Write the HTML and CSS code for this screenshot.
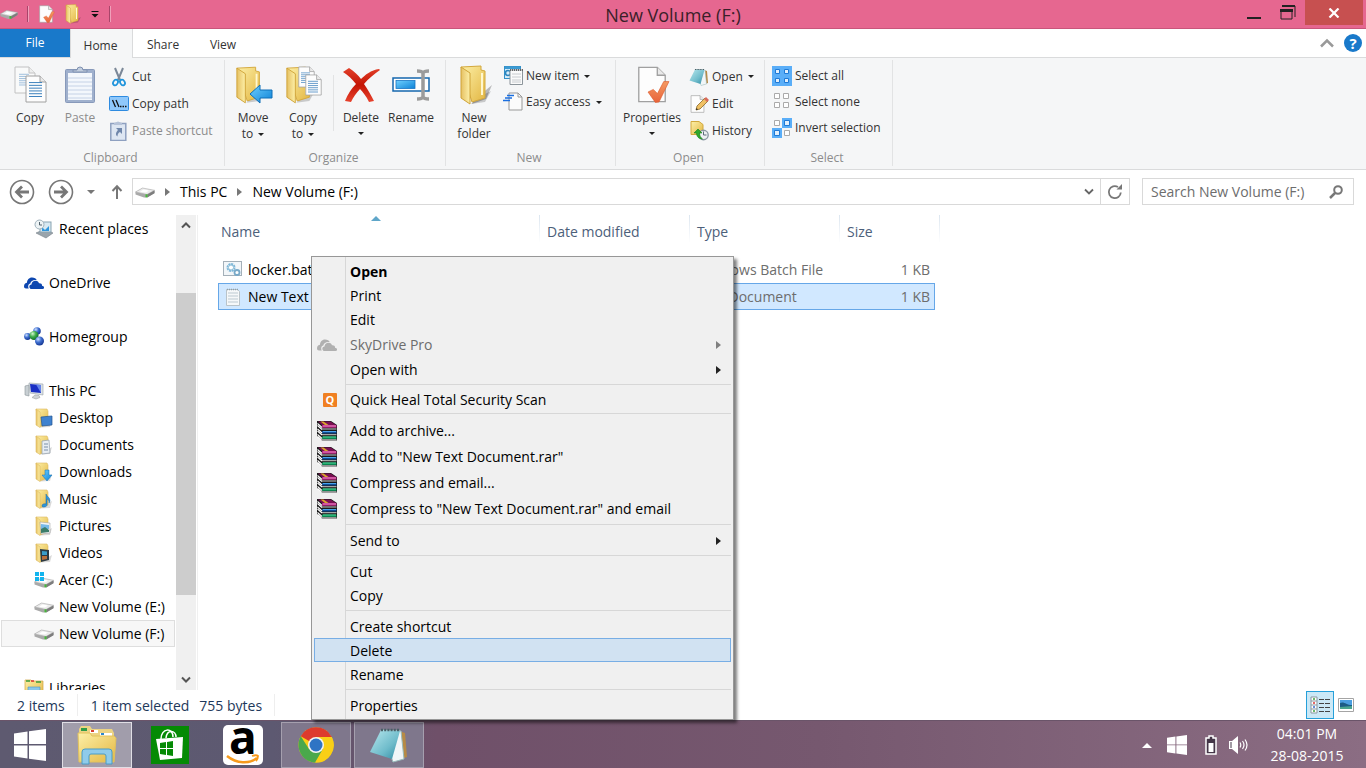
FILE: index.html
```html
<!DOCTYPE html>
<html lang="en">
<head>
  <meta charset="UTF-8" />
  <meta name="viewport" content="width=device-width, initial-scale=1.0" />
  <title>New Volume (F:)</title>
  <link rel="stylesheet" href="styles.css">
</head>
<body>
  <!-- shared icons -->
  <svg class="defs" width="0" height="0" aria-hidden="true">
    <defs>
      <linearGradient id="gFolder" x1="0" y1="0" x2="1" y2="1"><stop offset="0" stop-color="#fdf0a8"/><stop offset="1" stop-color="#e3b743"/></linearGradient>
      <linearGradient id="gFlap" x1="0" y1="0" x2="1" y2="0"><stop offset="0" stop-color="#e6c163"/><stop offset="1" stop-color="#fdf0a8"/></linearGradient>
      <linearGradient id="gBlue" x1="0" y1="0" x2="1" y2="1"><stop offset="0" stop-color="#6fd0ff"/><stop offset="1" stop-color="#0e82d6"/></linearGradient>
      <linearGradient id="gPad" x1="0" y1="0" x2="1" y2="1"><stop offset="0" stop-color="#b8e8ee"/><stop offset=".6" stop-color="#6fbccb"/><stop offset="1" stop-color="#2f8aa3"/></linearGradient>
      <linearGradient id="gRed" x1="0" y1="0" x2="0" y2="1"><stop offset="0" stop-color="#e2402a"/><stop offset=".5" stop-color="#c41505"/><stop offset="1" stop-color="#e8432e"/></linearGradient>
      <linearGradient id="gCheck" x1="0" y1="0" x2="0" y2="1"><stop offset="0" stop-color="#f49a62"/><stop offset="1" stop-color="#e8633a"/></linearGradient>
      <radialGradient id="gBall" cx=".35" cy=".3" r=".7"><stop offset="0" stop-color="#cfe0ff"/><stop offset=".5" stop-color="#3f6fd0"/><stop offset="1" stop-color="#173a96"/></radialGradient>
      <radialGradient id="gGreen" cx=".35" cy=".3" r=".7"><stop offset="0" stop-color="#d5f7d0"/><stop offset=".5" stop-color="#3fae4c"/><stop offset="1" stop-color="#14702a"/></radialGradient>
    </defs>
    <symbol id="drive" viewBox="0 0 20 14">
      <path d="M.5 7 7 3.500 19.500 5.500 19.500 8 12 12.500 9 12.500 .5 9.500z" fill="#a9a9a9"/>
      <path d="M.5 7 7.500 3 19.500 5.300 12 9.500z" fill="#ececec" stroke="#aaa" stroke-width=".6"/>
      <path d="M5 6.700 8.500 4.500 14 5.500 11 7.500z" fill="#fff"/>
      <path d="M12.300 9.500v3l7.200-4.300V5.500z" fill="#7d7d7d"/>
      <path d="M10.500 9.300h2v3h-2z" fill="#46b83a"/>
    </symbol>
    <symbol id="folder" viewBox="0 0 32 40">
      <path d="M18 33 32 26 26 37 12 39z" fill="#000" opacity=".18"/>
      <path d="M2 2 22 1 22 5 26 6 26 33 13 37z" fill="url(#gFolder)" stroke="#d3a83c"/>
      <path d="M2 2 11 8 11 39 2 33z" fill="url(#gFlap)" stroke="#cfa338"/>
      <path d="M23 8v22" stroke="#fff7cf" stroke-width="2"/>
    </symbol>
    <symbol id="page" viewBox="0 0 22 28">
      <path d="M1 1h14l6 6v20H1z" fill="#fdfdfd" stroke="#a0a0a0"/>
      <path d="M15 1v6h6" fill="#e9e9e9" stroke="#a0a0a0"/>
    </symbol>
    <symbol id="lines" viewBox="0 0 14 18">
      <path d="M0 1h14M0 4h14M0 7h14M0 10h14M0 13h14M0 16h14" stroke="#2f78b8" stroke-width="1"/>
    </symbol>
    <symbol id="check" viewBox="0 0 20 22">
      <path d="M0 11.500 5 9 9 13 15 1.500 20 1.500 10.500 21 7 21.500z" fill="url(#gCheck)" stroke="#dd5a2c" stroke-width=".6"/>
    </symbol>
    <symbol id="notepad" viewBox="0 0 20 18">
      <path d="M15 2 18 3 19 15 13 17z" fill="#b78a45"/>
      <path d="M6 1.500 16 2 17.500 16 12 17.500z" fill="#f1f6f8" stroke="#9bb" stroke-width=".5"/>
      <path d="M6 1.500 15.500 2 11.500 16 .5 12.500z" fill="url(#gPad)"/>
      <path d="M6 1.500h9.500" stroke="#4a6068" stroke-width="1.200" stroke-dasharray="1 .6"/>
    </symbol>
    <symbol id="rar" viewBox="0 0 20 20">
      <path d="M0 0h14l6 4v15.500H5L0 15z" fill="#1a1a1a"/>
      <path d="M1 .5h12.500l5.500 3.500H5z" fill="#7a0f52"/>
      <path d="M3.500.5h3l5 3.500H8z" fill="#d9a62b"/>
      <path d="M5 4h14.500v2.800H5z" fill="#b0217a"/><path d="M6 4.500h13v1H6z" fill="#ef8cc8"/>
      <path d="M5 10h14.500v2.500H5z" fill="#0f4f97"/><path d="M6 10h13v1H6z" fill="#4aa3ec"/>
      <path d="M5 15.500h14.500V18H5z" fill="#0b8550"/><path d="M6 15.500h13v1H6z" fill="#4fe0a0"/>
      <path d="M.5 2.500l4.500 4M.5 4.500l4.500 4M.5 8l4.500 4M.5 10l4.500 4M.5 13.500l4.500 4M.5 15.500l4 3.500" stroke="#fff" stroke-width="1.100"/>
      <path d="M5 8h14.500M5 13.700h14.500M5 18.800h14.500" stroke="#f4f4f4" stroke-width=".8"/>
    </symbol>
    <symbol id="cloud" viewBox="0 0 20 14">
      <path d="M0 10.500C0 8 1.500 7 3 6.800 3 4 5 1.500 8 1.500c2.500 0 4 1 4.800 2.700-3-.7-6 .5-6.500 3.300C4 8 3.800 10.500 4.800 12.500H2C.8 12.500 0 11.500 0 10.500z"/>
      <path d="M7 13C4.500 12 5 8.500 7.500 8.500c0-4 6-5.200 7.500-1.300 2-.3 3.300 1 3 2.500 2.800.2 2.700 3.300.5 3.300z"/>
    </symbol>
    <symbol id="winlogo" viewBox="0 0 32 32">
      <path d="M0 4.500 13.500 2.500V15H0zM15 2.300 32 0V15H15zM0 16.500h13.500V29.500L0 27.500zM15 16.500h17V32L15 29.700z"/>
    </symbol>
    <symbol id="sidefolder" viewBox="0 0 18 20">
      <path d="M8 17 17 12 15 19 5 19.500z" fill="#000" opacity=".15"/>
      <path d="M1 1 12 1 13 3 13 16 5 19z" fill="url(#gFolder)" stroke="#ddbb62" stroke-width=".6"/>
      <path d="M1 1 5 4 5 19.500 1 17z" fill="url(#gFlap)" stroke="#ddbb62" stroke-width=".6"/>
    </symbol>
  </svg>

  <header class="titlebar">
    <div class="quick">
      <svg width="18" height="14"><use href="#drive"/></svg>
      <i class="qsep"></i>
      <button aria-label="Properties"><svg width="18" height="20" viewBox="0 0 18 20"><use href="#page" x="1" y="1" width="14" height="18"/><use href="#check" x="5" y="7" width="12" height="12"/></svg></button>
      <button aria-label="New folder"><svg width="16" height="20"><use href="#folder"/></svg></button>
      <button aria-label="Customize"><svg width="10" height="10" viewBox="0 0 10 10"><path d="M1.500 2h7v1h-7zM1.500 5h7L5 8.500z" fill="#111"/></svg></button>
      <i class="qsep"></i>
    </div>
    <h1>New Volume (F:)</h1>
    <div class="winbtns">
      <button aria-label="Minimize"><svg width="14" height="20" viewBox="0 0 14 20"><path d="M0 14h14v2H0z" fill="#222"/></svg></button>
      <button aria-label="Restore"><svg width="16" height="16" viewBox="0 0 16 16"><path d="M3 1h12v11M1 6h11v8H1z" fill="none" stroke="#222"/><path d="M2 0h13v2H2zM0 4h13v3H0z" fill="#222"/></svg></button>
      <button class="close" aria-label="Close"><svg width="12" height="10" viewBox="0 0 12 10"><path d="M1.500.5l9 9M10.500.5l-9 9" stroke="#fff" stroke-width="2.200"/></svg></button>
    </div>
  </header>

  <nav class="tabs">
    <button class="file">File</button>
    <button class="active">Home</button>
    <button>Share</button>
    <button>View</button>
    <div class="tabs-right">
      <button aria-label="Minimize the ribbon"><svg width="14" height="10" viewBox="0 0 14 10"><path d="M1 8.500l6-6 6 6" fill="none" stroke="#999" stroke-width="2.500"/></svg></button>
      <button class="help" aria-label="Help">?</button>
    </div>
  </nav>

  <section class="ribbon">
    <div class="group clipboard">
      <div class="tools">
        <button class="big"><svg width="36" height="38" viewBox="0 0 36 38"><g opacity=".6"><use href="#page" x="2" y="0" width="22" height="28"/><use href="#lines" x="7" y="7" width="10" height="14"/></g><use href="#page" x="13" y="9" width="22" height="28"/><use href="#lines" x="17" y="15" width="13" height="18"/></svg>Copy</button>
        <button class="big" disabled><svg width="32" height="38" viewBox="0 0 32 38"><rect x="1.500" y="3.500" width="29" height="33" rx="1" fill="#9fb0cd" stroke="#8799ba"/><path d="M4 7h24v27H4z" fill="#f3f7fc"/><path d="M4 12h24M4 16h24M4 20h24M4 24h24M4 28h24M4 32h24" stroke="#c5d2e6"/><path d="M9 6V4h4a3 3 0 0 1 6 0h4v2z" fill="#c2cede" stroke="#7e90b0"/></svg>Paste</button>
        <div class="small-col">
          <button><svg width="20" height="20" viewBox="0 0 20 20"><path d="M6 1l5 12M14 1L9 13" stroke="#7b8898" stroke-width="2"/><ellipse cx="6.500" cy="15.500" rx="2.200" ry="3" transform="rotate(30 6.500 15.500)" fill="none" stroke="#1f94dc" stroke-width="1.800"/><ellipse cx="13.500" cy="15.500" rx="2.200" ry="3" transform="rotate(-30 13.500 15.500)" fill="none" stroke="#1f94dc" stroke-width="1.800"/></svg>Cut</button>
          <button><svg width="20" height="20" viewBox="0 0 20 20"><rect x=".5" y="2.500" width="19" height="14" rx="1" fill="#8fc8fb" stroke="#2e8be0"/><path d="M3.500 6l3 7M7 6l3 7" stroke="#111" stroke-width="1.300"/><path d="M11 12.500h1.500M13.500 12.500H15M16 12.500h1.500" stroke="#111" stroke-width="1.500"/></svg>Copy path</button>
          <button disabled><svg width="20" height="20" viewBox="0 0 20 20"><rect x="1.800" y="2.500" width="15" height="17" fill="#dde6f2" stroke="#8ea0c0" stroke-width="1.500"/><path d="M5 4V2l4-1.500L13 2v2z" fill="#b5c2d8"/><path d="M7 7h6v6l-2-2c-2 1-2.500 2.500-2.500 4.500C6 14 7 11 9 9z" fill="#6f86aa"/></svg>Paste shortcut</button>
        </div>
      </div>
      <div class="caption">Clipboard</div>
    </div>

    <div class="group organize">
      <div class="tools">
        <button class="big"><svg width="40" height="38" viewBox="0 0 40 38"><use href="#folder" x="2" y="0" width="30" height="38"/><path d="M17 28l10-9v5h12v8H27v5z" fill="url(#gBlue)" stroke="#0f6fb8"/></svg>Move<span>to <i class="caret"></i></span></button>
        <button class="big"><svg width="40" height="38" viewBox="0 0 40 38"><use href="#folder" x="2" y="0" width="30" height="38"/><use href="#page" x="15" y="0" width="17" height="22"/><use href="#lines" x="18" y="6" width="9" height="12"/><use href="#page" x="22" y="8" width="17" height="22"/><use href="#lines" x="25" y="14" width="10" height="14"/></svg>Copy<span>to <i class="caret"></i></span></button>
        <i class="vline"></i>
        <button class="big"><svg width="38" height="38" viewBox="0 0 38 38"><path d="M1 6 7 2c5 3 9 7 12 11C23 9 29 4 37 3l1 1c-6 4-12 9-16 14 4 6 7 11 10 17l-5 1c-3-6-6-10-9-13-4 4-7 9-9 13l-6-1c3-7 6-12 11-17C10 13 6 9 1 6z" fill="url(#gRed)"/></svg>Delete<i class="caret"></i></button>
        <button class="big"><svg width="40" height="38" viewBox="0 0 40 38"><rect x="2" y="12" width="36" height="13" fill="#fff" stroke="#1467ae" stroke-width="1.500"/><rect x="5" y="14.500" width="19" height="8" fill="url(#gBlue)" stroke="#1a76c4" stroke-width=".8"/><path d="M26 5c3 0 5 0 6 2 1-2 3-2 6-2M26 33c3 0 5 0 6-2 1 2 3 2 6 2M32 6v26" stroke="#9b9b9b" stroke-width="3.500" fill="none"/></svg>Rename</button>
      </div>
      <div class="caption">Organize</div>
    </div>

    <div class="group new">
      <div class="tools">
        <button class="big"><svg width="36" height="40" viewBox="0 0 36 40"><path d="M18 35 36 20 30 34 16 39z" fill="#000" opacity=".25"/><use href="#folder" x="3" y="0" width="32" height="40"/></svg>New<span>folder</span></button>
        <div class="small-col tight">
          <button><svg width="20" height="20" viewBox="0 0 20 20"><rect x="1.500" y=".5" width="16" height="12" fill="#d6ecf9" stroke="#3490c8"/><path d="M2 .5h15V3H2z" fill="#3c9bd3"/><circle cx="5" cy="7" r="2.500" fill="none" stroke="#2b86c0" stroke-width="1.500"/><path d="M7 4h12.500v14.500H7z" fill="#fbfbfb" stroke="#8c959b"/><path d="M7 4h13" stroke="#666" stroke-width="2" stroke-dasharray="1 1"/><path d="M9 8h9M9 11h9M9 14h9M9 16h9" stroke="#c8ccd0"/></svg>New item <i class="caret"></i></button>
          <button><svg width="20" height="20" viewBox="0 0 20 20"><path d="M6 1h9l4 4v13H6z" fill="#fbfbfb" stroke="#999"/><path d="M15 1v4h4" fill="none" stroke="#999"/><path d="M4 3.500h7M2 6h7M0 8.500h7" stroke="#1b6fe0" stroke-width="1.300"/></svg>Easy access <i class="caret"></i></button>
        </div>
      </div>
      <div class="caption">New</div>
    </div>

    <div class="group open">
      <div class="tools">
        <button class="big wide"><svg width="36" height="40" viewBox="0 0 36 40"><use href="#page" x="3" y="1" width="30" height="37"/><use href="#check" x="13" y="15" width="23" height="23"/></svg>Properties<i class="caret"></i></button>
        <div class="small-col">
          <button><svg width="20" height="20"><use href="#notepad"/></svg>Open <i class="caret"></i></button>
          <button><svg width="20" height="20" viewBox="0 0 20 20"><use href="#page" x="1" y="1" width="15" height="18"/><path d="M7 16l1-4 8-8 3 3-8 8z" fill="#f0c063" stroke="#8a6a2a" stroke-width=".8"/><path d="M15 5l2-2 3 3-2 2z" fill="#d8695a"/><path d="M7 16l.6-2 1.400 1.400z" fill="#222"/></svg>Edit</button>
          <button><svg width="20" height="20" viewBox="0 0 20 20"><path d="M2 .5h8l4 3v10H2z" fill="url(#gFolder)" stroke="#d2a83c"/><circle cx="14.500" cy="14" r="4.700" fill="#eef1f3" stroke="#8b98a3" stroke-width="1.400"/><path d="M14.500 10.500V14h3" stroke="#5c6b78" fill="none"/><path d="M5 12l4-4 4 4h-2.500c0 2.500 1 4.500 3 6-4-.3-6-2.500-6-6z" fill="#2fa82b" stroke="#188018" stroke-width=".6"/></svg>History</button>
        </div>
      </div>
      <div class="caption">Open</div>
    </div>

    <div class="group select">
      <div class="tools">
        <div class="small-col tight">
          <button><svg width="20" height="20" viewBox="0 0 20 20"><path d="M0 0h20v20H0z" fill="#5aaef8"/><path d="M3.500 3.500h4v4h-4zM12.500 3.500h4v4h-4zM3.500 12.500h4v4h-4zM12.500 12.500h4v4h-4z" fill="#e2effc" stroke="#1f7ad6"/></svg>Select all</button>
          <button><svg width="20" height="20" viewBox="0 0 20 20"><path d="M2.500 1.500h5v5h-5zM11.500 1.500h5v5h-5zM2.500 10.500h5v5h-5zM11.500 10.500h5v5h-5z" fill="#fff" stroke="#aaa"/></svg>Select none</button>
          <button><svg width="20" height="20" viewBox="0 0 20 20"><path d="M10 0h10v10H10zM0 10h10v10H0z" fill="#5aaef8"/><path d="M12.500 2.500h5v5h-5zM2.500 12.500h5v5h-5z" fill="#e2effc" stroke="#1f7ad6"/><path d="M2.500 2.500h5v5h-5zM12.500 12.500h5v5h-5z" fill="#fff" stroke="#aaa"/></svg>Invert selection</button>
        </div>
      </div>
      <div class="caption">Select</div>
    </div>
  </section>

  <div class="navbar">
    <button class="round" aria-label="Back"><svg width="26" height="26" viewBox="0 0 26 26"><circle cx="13" cy="13" r="11.500" fill="#fff" stroke="#777" stroke-width="1.600"/><path d="M20 13H8M13 7.500L7.500 13l5.500 5.500" fill="none" stroke="#777" stroke-width="2.800"/></svg></button>
    <button class="round" aria-label="Forward"><svg width="26" height="26" viewBox="0 0 26 26"><circle cx="13" cy="13" r="11.500" fill="#fff" stroke="#777" stroke-width="1.600"/><path d="M6 13h12M13 7.500l5.500 5.500-5.500 5.500" fill="none" stroke="#777" stroke-width="2.800"/></svg></button>
    <button aria-label="Recent locations"><svg width="8" height="6" viewBox="0 0 8 6"><path d="M0 1h8L4 5z" fill="#777"/></svg></button>
    <button class="up" aria-label="Up"><svg width="12" height="16" viewBox="0 0 12 16"><path d="M6 15V3M1.500 7L6 2.200 10.500 7" fill="none" stroke="#777" stroke-width="2"/></svg></button>
    <div class="address">
      <svg width="20" height="14"><use href="#drive"/></svg>
      <svg class="chev" width="5" height="8" viewBox="0 0 5 8"><path d="M0 0l5 4-5 4z" fill="#777"/></svg>
      <a href="#">This PC</a>
      <svg class="chev" width="5" height="8" viewBox="0 0 5 8"><path d="M0 0l5 4-5 4z" fill="#777"/></svg>
      <a href="#">New Volume (F:)</a>
      <button class="drop" aria-label="Previous locations"><svg width="10" height="8" viewBox="0 0 10 8"><path d="M1 1.500l4 4 4-4" fill="none" stroke="#666" stroke-width="1.800"/></svg></button>
      <button class="refresh" aria-label="Refresh"><svg width="16" height="16" viewBox="0 0 16 16"><path d="M13.800 8.500A6 6 0 1 1 11 3" fill="none" stroke="#777" stroke-width="1.800"/><path d="M9.500 5.500H15V0z" fill="#777"/></svg></button>
    </div>
    <div class="search">
      <input type="text" aria-label="Search" placeholder="Search New Volume (F:)">
      <svg width="14" height="14" viewBox="0 0 14 14"><circle cx="9" cy="5" r="3.800" fill="none" stroke="#777" stroke-width="2"/><path d="M6 8L1 13" stroke="#777" stroke-width="2.500"/></svg>
    </div>
  </div>

  <main>
    <aside>
      <ul class="tree">
        <li class="sub"><svg width="20" height="20" viewBox="0 0 20 20"><path d="M2 14l9-4 8 4-7 5z" fill="#9aa4ab" stroke="#77828a" stroke-width=".6"/><rect x="6" y="3" width="11" height="10" fill="#d7e9f2" stroke="#8aa3b1"/><path d="M8 8l3 3 4-4v5H8z" fill="#3096dc"/><circle cx="5.500" cy="5.500" r="4.500" fill="#edf3f5" stroke="#9fb1bb"/><path d="M5.500 3v3H8" stroke="#52636e" fill="none"/></svg>Recent places</li>
        <li class="gap"></li>
        <li><svg width="20" height="14" fill="#0d47b0"><use href="#cloud"/></svg>OneDrive</li>
        <li class="gap"></li>
        <li><svg width="20" height="20" viewBox="0 0 20 20"><circle cx="3.500" cy="9.500" r="3.400" fill="url(#gBall)"/><circle cx="13" cy="4" r="3.800" fill="url(#gBall)"/><circle cx="10" cy="8.500" r="4.500" fill="url(#gGreen)"/><circle cx="15.500" cy="14" r="4.500" fill="url(#gBall)"/></svg>Homegroup</li>
        <li class="gap"></li>
        <li><svg width="20" height="20" viewBox="0 0 20 20"><path d="M1 5l4-1v11l-4-1z" fill="#c8cfd3" stroke="#8a9499" stroke-width=".6"/><path d="M5 2l14 1v11L6 12z" fill="#dce2e6" stroke="#98a2a8" stroke-width=".6"/><path d="M6 3l11 1v8L7 11z" fill="#1a2fc4"/><path d="M12 3.500l5 .5v8z" fill="#6484ea"/><path d="M11 14l4 .5 1 2-4 1.500-4-1.500z" fill="#cfd4d7" stroke="#999" stroke-width=".5"/></svg>This PC</li>
        <li class="sub"><svg width="18" height="20" viewBox="0 0 18 20"><use href="#sidefolder"/><path d="M6 9l11-1v9l-10 1z" fill="#3f82cf" stroke="#23558f" stroke-width=".7"/></svg>Desktop</li>
        <li class="sub"><svg width="18" height="20" viewBox="0 0 18 20"><use href="#sidefolder"/><path d="M7 6l7-1 1 13-8 1z" fill="#e7edf3" stroke="#909eaa" stroke-width=".7"/><path d="M9 9h4M9 12h4M9 15h4" stroke="#7a8fa8"/></svg>Documents</li>
        <li class="sub"><svg width="18" height="20" viewBox="0 0 18 20"><use href="#sidefolder"/><path d="M10 8h4v5h3l-5 6-5-6h3z" fill="url(#gBlue)" stroke="#1470b0" stroke-width=".5"/></svg>Downloads</li>
        <li class="sub"><svg width="18" height="20" viewBox="0 0 18 20"><use href="#sidefolder"/><path d="M11 5c1 3 4 3 4 7l-1 2c0-3-1-4-2-4v6c0 2-5 3-5 1s2-2.500 4-2z" fill="#2f96da" stroke="#1b69a5" stroke-width=".5"/></svg>Music</li>
        <li class="sub"><svg width="18" height="20" viewBox="0 0 18 20"><use href="#sidefolder"/><path d="M5 6l10 1v10l-9 1z" fill="#f5f5f5" stroke="#999" stroke-width=".5"/><path d="M6 8l8 1v4H6z" fill="#77b9e8"/><path d="M6 13l4-2 4 3v2l-8 1z" fill="#3b7d6a"/></svg>Pictures</li>
        <li class="sub"><svg width="18" height="20" viewBox="0 0 18 20"><use href="#sidefolder"/><path d="M5 6l9 1v10l-8 2z" fill="#2c3a44"/><path d="M7 8l5 .5v3.500L7 12z" fill="#3a9cc9"/><path d="M7 13h5v3l-5 1z" fill="#b9703c"/></svg>Videos</li>
        <li class="sub"><svg width="20" height="18" viewBox="0 0 20 18"><use href="#drive" y="4" width="20" height="14"/><path d="M1 1h4v4H1zM6 1h4v4H6zM1 6h4v4H1zM6 6h4v4H6z" fill="#12b4ee"/></svg>Acer (C:)</li>
        <li class="sub"><svg width="20" height="14"><use href="#drive"/></svg>New Volume (E:)</li>
        <li class="sub current"><svg width="20" height="14"><use href="#drive"/></svg>New Volume (F:)</li>
        <li class="gap"></li>
        <li><svg width="20" height="20" viewBox="0 0 20 20"><path d="M1 2h6l1 1h11v15H1z" fill="url(#gFolder)" stroke="#cfa544" stroke-width=".7"/><path d="M2 3h4M12 4h5" stroke="#3b9b3b" stroke-width="1.500"/><path d="M7 3h3" stroke="#d33" stroke-width="1.500"/><path d="M4 9h12v9h-3v-5H7v5H4z" fill="#8ac6ea" stroke="#4c93c2" stroke-width=".6"/></svg>Libraries</li>
      </ul>
      <div class="scrollbar">
        <button aria-label="Scroll up"><svg width="10" height="8" viewBox="0 0 10 8"><path d="M1 6.500l4-4 4 4" fill="none" stroke="#555" stroke-width="2"/></svg></button>
        <div class="track"><div class="thumb"></div></div>
        <button aria-label="Scroll down"><svg width="10" height="8" viewBox="0 0 10 8"><path d="M1 1.500l4 4 4-4" fill="none" stroke="#555" stroke-width="2"/></svg></button>
      </div>
    </aside>

    <div class="files">
      <table>
        <thead>
          <tr>
            <th class="c-name">Name<svg class="sort" width="10" height="5" viewBox="0 0 10 5"><path d="M0 5l5-5 5 5z" fill="#5fa6c9"/></svg></th>
            <th class="c-date">Date modified</th>
            <th class="c-type">Type</th>
            <th class="c-size">Size</th>
          </tr>
        </thead>
        <tbody>
          <tr>
            <td><div class="fname"><svg width="20" height="18" viewBox="0 0 20 18"><rect x=".5" y=".5" width="18" height="14" fill="#f2f6f9" stroke="#a4b0b9"/><circle cx="8" cy="6.500" r="3.500" fill="none" stroke="#7db7d8" stroke-width="2" stroke-dasharray="2 .7"/><circle cx="8" cy="6.500" r="2.500" fill="#fff" stroke="#8bbdd8"/><circle cx="14" cy="11.500" r="2.500" fill="#fff" stroke="#78a9c8" stroke-width="1.800"/></svg>locker.bat</div></td>
            <td></td>
            <td>Windows Batch File</td>
            <td class="size">1 KB</td>
          </tr>
          <tr class="selected">
            <td><div class="fname"><svg width="20" height="18" viewBox="0 0 20 18"><path d="M3.500 1.500h11l2 2v14h-13z" fill="#f6f8f9" stroke="#b9c3c9"/><path d="M5 5h10M5 8h10M5 11h10M5 14h10" stroke="#bcc9d1"/><path d="M4 1.500h11" stroke="#8fa0aa" stroke-width="1.500" stroke-dasharray="1 1"/></svg>New Text Document</div></td>
            <td></td>
            <td>Text Document</td>
            <td class="size">1 KB</td>
          </tr>
        </tbody>
      </table>
    </div>
  </main>

  <footer class="status">
    <span class="count">2 items</span>
    <span class="sel">1 item selected</span>
    <span class="bytes">755 bytes</span>
    <div class="views">
      <button class="on" aria-label="Details"><svg width="20" height="18" viewBox="0 0 20 18"><path d="M1 1h6v16H1z" fill="#fff" stroke="#89979f"/><path d="M1 5h6M1 9h6M1 13h6" stroke="#89979f"/><path d="M3 3h2M3 15h2" stroke="#3ca33c" stroke-width="1.300"/><path d="M3 7h2" stroke="#d33" stroke-width="1.300"/><path d="M3 11h2" stroke="#36c" stroke-width="1.300"/><path d="M9 3.500h5M15 3.500h5M9 7.500h5M15 7.500h5M9 11.500h5M15 11.500h5M9 15.500h5M15 15.500h5" stroke="#444"/></svg></button>
      <button aria-label="Large icons"><svg width="16" height="14" viewBox="0 0 16 14"><path d="M.5.5h15v13H.5z" fill="#fff" stroke="#a4a4a4"/><path d="M2 2h12v9H2z" fill="#4a9ee0"/><path d="M2 5c4-2 6 2 12 2v4H2z" fill="#1b5c86"/><path d="M2 9l12-1v3H2z" fill="#4aa58f"/></svg></button>
    </div>
  </footer>

  <div class="taskbar">
    <button class="start" aria-label="Start"><svg width="32" height="32" fill="#fff"><use href="#winlogo"/></svg></button>
    <button class="task front" aria-label="File Explorer"><svg width="42" height="40" viewBox="0 0 42 40"><path d="M3 4l2-3h9l2 3h20l2 4v28H3z" fill="#ecd384"/><path d="M5 3h6v3H5z" fill="#2f9c48"/><path d="M14 5h8v3h-8z" fill="#fff"/><path d="M15 5h3v2h-3z" fill="#d8402e"/><path d="M24 8h12v3H24z" fill="#fff"/><path d="M25 8h3v2h-3z" fill="#2b87cf"/><path d="M2 8h12l2 3h22l2 2-2 24H3z" fill="url(#gFolder)" stroke="#e2c25d"/><path d="M6 27q0-3 3-3h24q3 0 3 3v12h-6v-8q0-2-2-2H15q-2 0-2 2v8H6z" fill="#8fcbea" stroke="#4b9cc6"/></svg></button>
    <button class="task" aria-label="Store"><svg width="38" height="38" viewBox="0 0 38 38"><path d="M0 0h38v38H0z" fill="#058a05"/><path d="M10 13c0-11 12-12 12-2M15 12c1-9 10-8 10-1" fill="none" stroke="#fff" stroke-width="1.500"/><path d="M5 13l27-2-1 21-22 2z" fill="#fff"/><path d="M9 17l6-1v6H9zM16 16l6-1v7h-6zM9 23h6v6l-6-1zM16 23h6v7l-6-1z" fill="#058a05"/></svg></button>
    <button class="task" aria-label="Amazon"><svg class="amazon" width="40" height="40" viewBox="0 0 40 40"><rect width="40" height="40" rx="5" fill="#fff"/><text x="20" y="29" class="amz">a</text><path d="M4 31c10 8 22 8 30 2" fill="none" stroke="#f79a1c" stroke-width="2.500"/><path d="M29 31c3-1 5-1 6 0 0 2 0 3-2 5" fill="none" stroke="#f79a1c" stroke-width="1.800"/></svg></button>
    <button class="task running" aria-label="Chrome"><svg width="36" height="36" viewBox="0 0 36 36"><circle cx="18" cy="18" r="17.500" fill="#f9cf16"/><path d="M18 18L2.800 9.200A17.500 17.500 0 0 1 33.200 9.200L34 10H18z" fill="#dd3b2e"/><path d="M2.800 9.300A17.500 17.500 0 0 0 18 35.500L25 22l-14 0z" fill="#4aa84c"/><path d="M25 22L17 35.500A17.500 17.500 0 0 0 33.800 10H18z" fill="#f9cf16"/><circle cx="18" cy="18" r="8" fill="#f4f4f4"/><circle cx="18" cy="18" r="6.500" fill="#2f74c4"/></svg></button>
    <button class="task running" aria-label="Notepad"><svg width="40" height="36"><use href="#notepad"/></svg></button>
    <div class="tray">
      <button aria-label="Show hidden icons"><svg width="10" height="6" viewBox="0 0 10 6"><path d="M0 6l5-5 5 5z" fill="#fff"/></svg></button>
      <svg class="t-win" width="20" height="20" fill="#fff"><use href="#winlogo"/></svg>
      <svg class="t-bat" width="12" height="20" viewBox="0 0 12 20"><path d="M4 1h4v2h3v16H1V3h3z" fill="#443648" stroke="#fff" stroke-width="1.500"/><path d="M3.500 8h5v9h-5z" fill="#fff"/></svg>
      <svg class="t-vol" width="20" height="20" viewBox="0 0 20 20"><path d="M1 6h3l6-5v18l-6-5H1z" fill="#fff"/><path d="M3 7v6" stroke="#443648"/><path d="M12 7.500q1.500 2.500 0 5M14.500 6q3 4 0 8M17 4.500q4 5.500 0 11" fill="none" stroke="#fff" stroke-width="1.200"/></svg>
      <div class="clock">04:01 PM<br>28-08-2015</div>
    </div>
  </div>

  <menu class="context">
    <li class="bold">Open</li>
    <li>Print</li>
    <li>Edit</li>
    <li class="tall off"><svg width="20" height="14" fill="#b0b0b0"><use href="#cloud"/></svg>SkyDrive Pro<i class="arrow"></i></li>
    <li>Open with<i class="arrow"></i></li>
    <li class="sep"></li>
    <li class="short"><svg class="qh" width="14" height="14" viewBox="0 0 14 14"><rect width="14" height="14" rx="1" fill="#f08022"/><text x="7" y="11" class="qtext">Q</text></svg>Quick Heal Total Security Scan</li>
    <li class="sep"></li>
    <li class="tall"><svg width="20" height="20"><use href="#rar"/></svg>Add to archive...</li>
    <li class="tall"><svg width="20" height="20"><use href="#rar"/></svg>Add to "New Text Document.rar"</li>
    <li class="tall"><svg width="20" height="20"><use href="#rar"/></svg>Compress and email...</li>
    <li class="tall"><svg width="20" height="20"><use href="#rar"/></svg>Compress to "New Text Document.rar" and email</li>
    <li class="sep"></li>
    <li>Send to<i class="arrow"></i></li>
    <li class="sep"></li>
    <li>Cut</li>
    <li>Copy</li>
    <li class="sep"></li>
    <li>Create shortcut</li>
    <li class="hover">Delete</li>
    <li>Rename</li>
    <li class="sep"></li>
    <li>Properties</li>
  </menu>
</body>
</html>
```
FILE: styles.css
```css
* {
  box-sizing: border-box;
}

body {
  margin: 0;
  height: 100vh;
  display: flex;
  flex-direction: column;
  overflow: hidden;
  background: #fff;
  color: #000;
  font-family: "Open Sans", "Noto Sans", sans-serif;
  font-size: 14px;
  line-height: 20px;
}

button {
  border: none;
  background: none;
  padding: 0;
  margin: 0;
  font: inherit;
  color: inherit;
  white-space: nowrap;
}

svg {
  display: block;
  flex: none;
}

.defs {
  position: absolute;
}

/* title bar */
.titlebar {
  display: flex;
  height: 29px;
  flex: none;
  background: #e66790;
  border-bottom: 1px solid #c9557b;
}

.quick,
.winbtns {
  width: 150px;
}

.quick {
  display: flex;
  align-items: center;
  gap: 9px;
}

.qsep {
  width: 2px;
  height: 16px;
  background: #a8456a;
  border-right: 1px solid #f0a0ba;
}

.titlebar h1 {
  flex: 1;
  margin: 0;
  padding-right: 20px;
  text-align: center;
  font-size: 18px;
  font-weight: 400;
  line-height: 30px;
  color: #3a2029;
}

.winbtns {
  display: flex;
  justify-content: flex-end;
  align-items: flex-start;
}

.winbtns button {
  width: 34px;
  height: 25px;
  display: flex;
  align-items: center;
  justify-content: center;
}

.winbtns .close {
  width: 58px;
  margin-right: 3px;
  background: #c75050;
}

/* tabs */
.tabs {
  display: flex;
  height: 29px;
  flex: none;
  border-bottom: 1px solid #dadbdc;
  font-size: 12px;
  color: #333;
}

.tabs > button {
  width: 60px;
  padding-top: 4px;
}

.tabs .file {
  width: 70px;
  padding-top: 0;
  padding-bottom: 0;
  background: #1979ca;
  color: #fff;
}

.tabs .active {
  width: 63px;
  height: 29px;
  padding-right: 2px;
  background: #f5f6f7;
  border: solid #dadbdc;
  border-width: 0 1px;
}

.tabs-right {
  margin-left: auto;
  display: flex;
  align-items: center;
  gap: 10px;
  padding-right: 4px;
}

.help {
  width: 18px;
  height: 18px;
  border-radius: 50%;
  background: #1979ca;
  color: #fff;
  font-size: 15px;
  font-weight: 700;
  line-height: 18px;
}

/* ribbon */
.ribbon {
  display: flex;
  height: 112px;
  flex: none;
  background: #f5f6f7;
  border-bottom: 1px solid #dadbdc;
  font-size: 12px;
  line-height: 16px;
  color: #333;
}

.group {
  display: flex;
  flex-direction: column;
  margin: 2px 0 3px;
  border-right: 1px solid #e2e3e4;
}

.clipboard {
  width: 225px;
}

.organize {
  width: 221px;
}

.new {
  width: 170px;
}

.open {
  width: 149px;
}

.select {
  width: 128px;
}

.tools {
  display: flex;
  flex: 1;
  padding-left: 3px;
}

.clipboard .tools {
  padding-left: 5px;
}

.caption {
  height: 16px;
  padding-right: 3px;
  text-align: center;
  color: #8c8c8c;
}

.big {
  width: 50px;
  display: flex;
  flex-direction: column;
  align-items: center;
  padding-top: 5px;
}

.big svg {
  height: 40px;
  margin-bottom: 5px;
}

.big > .caret {
  margin: 6px 0;
}

.big.wide {
  width: 66px;
}

button:disabled {
  color: #8c8c8c;
}

.caret {
  display: inline-block;
  border: 3px solid transparent;
  border-top-color: #222;
  border-bottom: none;
  vertical-align: middle;
  margin-left: 2px;
}

.vline {
  width: 1px;
  height: 56px;
  margin: 15px 2px 0 5px;
  background: #e2e3e4;
}

.small-col {
  display: flex;
  flex-direction: column;
  padding: 3px 4px 0;
}

.small-col button {
  height: 27px;
  display: flex;
  align-items: center;
  gap: 3px;
}

.small-col.tight button {
  height: 26px;
}

/* navigation bar */
.navbar {
  display: flex;
  align-items: center;
  height: 45px;
  flex: none;
  padding: 0 12px 2px 9px;
}

.round {
  margin-right: 13px;
}

.up {
  margin: 0 9px 0 16px;
}

.address {
  flex: 1;
  display: flex;
  align-items: center;
  height: 27px;
  margin-right: 12px;
  padding-left: 2px;
  border: 1px solid #d9d9d9;
}

.address a {
  color: #000;
  text-decoration: none;
}

.chev {
  margin: 0 10px;
}

.drop {
  width: 22px;
  margin-left: auto;
  display: flex;
  justify-content: center;
}

.refresh {
  width: 29px;
  height: 25px;
  border-left: 1px solid #d9d9d9;
  display: flex;
  align-items: center;
  justify-content: center;
}

.search {
  width: 212px;
  height: 27px;
  display: flex;
  align-items: center;
  padding: 0 10px 0 8px;
  border: 1px solid #d9d9d9;
}

.search input {
  flex: 1;
  min-width: 0;
  border: none;
  padding: 0;
  font: inherit;
  outline: none;
}

.search input::placeholder {
  color: #6d6d6d;
}

/* main */
main {
  flex: 1;
  min-height: 0;
  display: flex;
}

aside {
  width: 198px;
  flex: none;
  display: flex;
  border-right: 1px solid #f0f0f0;
}

.tree {
  flex: 1;
  margin: 0;
  padding: 0 1px;
  list-style: none;
  overflow: hidden;
}

.tree li {
  height: 27px;
  display: flex;
  align-items: center;
  gap: 5px;
  padding-left: 22px;
  border: 1px solid transparent;
  white-space: nowrap;
}

.tree .sub {
  padding-left: 32px;
}

.tree svg {
  width: 20px;
}

.tree .current {
  background: #f7f7f7;
  border-color: #dedede;
}

.scrollbar {
  width: 20px;
  margin-right: 1px;
  display: flex;
  flex-direction: column;
  background: #f0f0f0;
}

.scrollbar button {
  height: 20px;
  display: flex;
  align-items: center;
  justify-content: center;
}

.track {
  flex: 1;
  display: grid;
  grid-template-rows: 58fr 302fr 75fr;
}

.thumb {
  grid-row: 2;
  background: #cdcdcd;
}

.files {
  flex: 1;
  padding-left: 20px;
}

table {
  width: 717px;
  table-layout: fixed;
  border-spacing: 0;
}

th {
  position: relative;
  height: 41px;
  padding: 7px 7px 0;
  text-align: left;
  vertical-align: top;
  font-weight: 400;
  color: #4c607a;
}

th::after {
  content: "";
  position: absolute;
  top: 0;
  right: 0;
  width: 1px;
  height: 28px;
  background: linear-gradient(#dce6f0, #fff);
}

.c-name {
  width: 322px;
  padding-left: 3px;
}

.c-date,
.c-type {
  width: 150px;
}

.c-size::after {
  right: -5px;
}

.sort {
  position: absolute;
  top: 1px;
  left: 50%;
  margin-left: -8px;
}

td {
  height: 27px;
  padding: 0 7px;
  color: #6d6d6d;
  border: solid transparent;
  border-width: 1px 0;
}

td:first-child {
  padding-left: 5px;
}

td.size {
  padding-right: 5px;
  text-align: right;
}

.fname {
  display: flex;
  align-items: center;
  gap: 5px;
  color: #000;
}

.selected td {
  background: #d1e8ff;
  border-color: #66a7e8;
}

.selected td:first-child {
  border-left: 1px solid #66a7e8;
  padding-left: 4px;
}

.selected td:last-child {
  border-right: 1px solid #66a7e8;
  padding-right: 4px;
}

/* status bar */
.status {
  display: flex;
  align-items: center;
  height: 30px;
  flex: none;
  padding: 0 12px 0 17px;
  color: #1e395b;
}

.status span {
  padding-top: 2px;
}

.count,
.bytes {
  padding-right: 12px;
  border-right: 1px solid #eee;
}

.sel {
  margin: 0 10px 0 13px;
}

.views {
  margin-left: auto;
  display: flex;
  align-items: center;
  gap: 4px;
}

.views .on {
  width: 28px;
  height: 28px;
  padding: 0 3px;
  background: #cbe8f6;
  border: 1px solid #26a0da;
}

/* taskbar */
.taskbar {
  display: flex;
  align-items: center;
  gap: 3px;
  height: 48px;
  flex: none;
  background: linear-gradient(90deg, #5e5a70 0%, #5d5971 20%, #6f5069 32%, #76586f 60%, #8b6d83 100%);
  border-top: 1px solid #6a5469;
  color: #fff;
}

.start {
  width: 59px;
  display: flex;
  justify-content: center;
}

.task {
  width: 70px;
  height: 46px;
  display: flex;
  align-items: center;
  justify-content: center;
}

.front {
  background: #a19dab;
  border: 1px solid #e0dee5;
}

.running {
  background: #7f778c;
  border: 1px solid #a59fae;
}

.amazon {
  overflow: visible;
}

.amz {
  font-size: 46px;
  font-weight: 700;
  text-anchor: middle;
}

.tray {
  margin-left: auto;
  display: flex;
  align-items: center;
}

.t-win {
  margin-left: 15px;
}

.t-bat {
  margin-left: 18px;
}

.t-vol {
  margin-left: 11px;
}

.clock {
  width: 118px;
  padding-top: 1px;
  text-align: center;
  line-height: 22px;
}

/* context menu */
.context {
  position: absolute;
  top: 256px;
  left: 311px;
  width: 423px;
  margin: 0;
  padding: 2px;
  list-style: none;
  background: linear-gradient(90deg, transparent 33px, #d7d7d7 33px, #d7d7d7 34px, transparent 34px) #f0f0f0;
  border: 1px solid #979797;
  box-shadow: 3px 3px 3px rgba(0, 0, 0, .5);
}

.context li {
  height: 24px;
  display: flex;
  align-items: center;
  padding-top: 2px;
  padding-left: 36px;
}

.context .tall {
  height: 26px;
}

.context .short {
  height: 22px;
}

.context .sep {
  height: 7px;
  padding: 0;
  margin-left: 32px;
}

.context .sep::after {
  content: "";
  flex: 1;
  height: 1px;
  background: #d7d7d7;
}

.context .bold {
  font-weight: 700;
}

.context .off {
  color: #6d6d6d;
}

.context .hover {
  background: #d1e2f2;
  box-shadow: inset 0 0 0 1px #78aee5;
}

.context svg {
  width: 20px;
  margin-left: -33px;
  margin-right: 13px;
}

.context .qh {
  width: 14px;
  margin-left: -27px;
}

.qtext {
  font-size: 11px;
  font-weight: 700;
  fill: #fff;
  text-anchor: middle;
}

.arrow {
  margin-left: auto;
  margin-right: 10px;
  border: 4px solid transparent;
  border-left: 5px solid #222;
  border-right: none;
}

.off .arrow {
  border-left-color: #808080;
}
```
